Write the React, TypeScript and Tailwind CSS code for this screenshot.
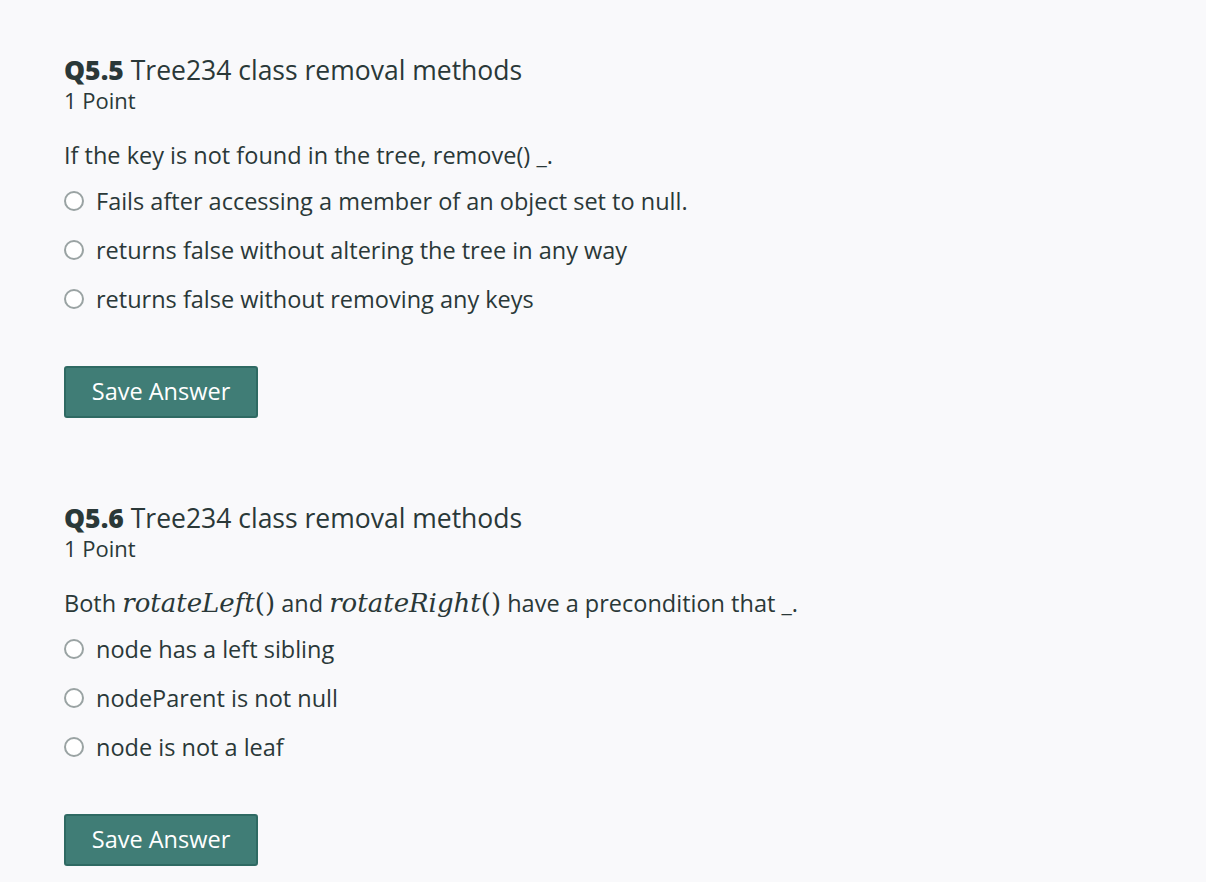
import React from "react";

const font = { fontFamily: "'Open Sans', Lato, sans-serif" };
const serif = { fontFamily: "'DejaVu Serif', 'Liberation Serif', serif" };

function Radio({ label }: { label: string }) {
  return (
    <label className="flex items-center h-[28px] text-[23.5px] leading-[28px] text-[#2a3838]">
      <span className="w-[20px] h-[20px] rounded-full border-[2px] border-[#9aa3a3] bg-white mr-[12px] shrink-0" />
      <span>{label}</span>
    </label>
  );
}

function Math({ children }: { children: React.ReactNode }) {
  return (
    <span className="italic text-[26px] leading-[28px]" style={serif}>
      {children}
    </span>
  );
}

function Paren() {
  return (
    <span className="text-[26px] leading-[28px]" style={serif}>
      ()
    </span>
  );
}

function Question({
  num,
  prompt,
  options,
}: {
  num: string;
  prompt: React.ReactNode;
  options: string[];
}) {
  return (
    <section className="font-medium">
      <h2 className="text-[26.5px] leading-[32px] text-[#2a3838]">
        <span className="font-extrabold">{num}</span> Tree234 class removal methods
      </h2>
      <div className="text-[22px] leading-[28px] text-[#2a3838]">1 Point</div>
      <div className="mt-[27px] h-[28px] text-[23.5px] leading-[28px] text-[#2a3838]">{prompt}</div>
      <div className="mt-[18px] flex flex-col gap-[21px]">
        {options.map((o) => (
          <Radio key={o} label={o} />
        ))}
      </div>
      <button className="mt-[53px] w-[194px] h-[52px] rounded-[3px] bg-[#407d76] border-[2px] border-[#2f6a63] text-white text-[23.5px] leading-none">
        Save Answer
      </button>
    </section>
  );
}

export default function App() {
  return (
    <div className="min-h-[882px] bg-[#f9f9fb] pl-[64px] pt-[54px]" style={font}>
      <Question
        num="Q5.5"
        prompt={<>If the key is not found in the tree, remove() _.</>}
        options={[
          "Fails after accessing a member of an object set to null.",
          "returns false without altering the tree in any way",
          "returns false without removing any keys",
        ]}
      />
      <div className="h-[84px]" />
      <Question
        num="Q5.6"
        prompt={
          <>
            Both <Math>rotateLeft</Math>
            <Paren /> and <Math>rotateRight</Math>
            <Paren /> have a precondition that _.
          </>
        }
        options={["node has a left sibling", "nodeParent is not null", "node is not a leaf"]}
      />
    </div>
  );
}
